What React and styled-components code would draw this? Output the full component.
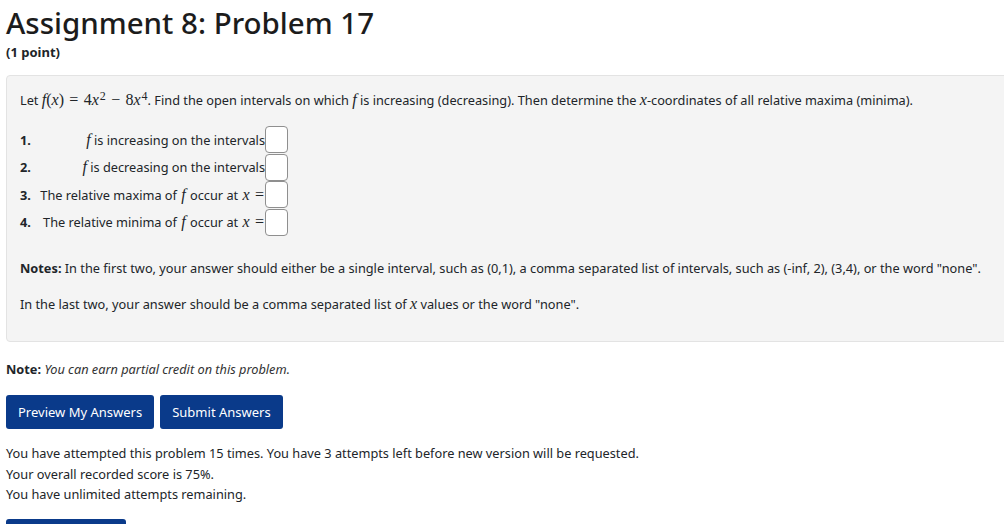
import React from 'react';
import styled, { createGlobalStyle } from 'styled-components';

const GlobalStyle = createGlobalStyle`
  html, body {
    margin: 0;
    padding: 0;
    background: #fff;
    overflow: hidden;
  }
  body {
    font-family: "Noto Sans", "Open Sans", sans-serif;
    color: #212529;
    font-size: 12.75px;
  }
`;

const Page = styled.div`
  padding: 0 0 0 6px;
  width: 1040px;
`;

const Title = styled.h1`
  font-size: 29.5px;
  font-weight: 500;
  line-height: 38px;
  margin: 4px 0 0 0;
  color: #1c1c1c;
`;

const Points = styled.div`
  font-size: 13px;
  font-weight: 700;
  line-height: 18px;
  margin-top: 1px;
`;

const ProblemBox = styled.div`
  margin-top: 14px;
  width: 1010px;
  background: #f4f4f4;
  border: 1px solid #e3e3e3;
  border-radius: 4px;
  padding: 14px 13px 27px;
  box-sizing: border-box;
`;

const Para = styled.p`
  margin: 0 0 ${p => p.gap || 0}px 0;
  line-height: 20px;
`;

const M = styled.span`
  font-family: "Liberation Serif", "DejaVu Serif", serif;
  font-style: ${p => (p.upright ? 'normal' : 'italic')};
  font-size: 16px;
  padding: 0 ${p => p.pad || 0}px;
`;

const Sup = styled.span`
  font-family: "Liberation Serif", serif;
  font-size: 12px;
  vertical-align: 5px;
  line-height: 0;
  padding-left: 1px;
`;

const AnswerGrid = styled.div`
  display: grid;
  grid-template-columns: 14px 231px 24px;
  grid-auto-rows: 27.5px;
  margin: 16px 0 22px;
  width: max-content;
`;

const Num = styled.span`
  font-weight: 700;
  align-self: center;
`;

const Label = styled.span`
  text-align: right;
  align-self: center;
  white-space: nowrap;
`;

const AnswerInput = styled.span`
  display: block;
  box-sizing: border-box;
  width: 23px;
  height: 27px;
  background: #fff;
  border: 1px solid #8f8f8f;
  border-radius: 4px;
`;

const NoteLine = styled.p`
  margin: 17px 0 0;
  line-height: 20px;
  em { color: #333; }
`;

const ButtonRow = styled.div`
  display: flex;
  gap: 6px;
  margin-top: 16px;
`;

const Button = styled.button`
  font-family: inherit;
  font-size: 13px;
  color: #fff;
  background: #0a3a8a;
  border: none;
  border-radius: 3px;
  height: 34px;
  padding: 0 12px;
  cursor: pointer;
`;

const Status = styled.div`
  margin-top: 14px;
  line-height: 20.5px;
`;

const FooterButton = styled(Button)`
  margin-top: 14px;
  width: 120px;
`;

const rows = [
  { n: '1.', label: <><M>f</M> is increasing on the intervals</> },
  { n: '2.', label: <><M>f</M> is decreasing on the intervals</> },
  { n: '3.', label: <>The relative maxima of <M pad={1}>f</M> occur at <M pad={1}>x</M> <M upright pad={1}>=</M></> },
  { n: '4.', label: <>The relative minima of <M pad={1}>f</M> occur at <M pad={1}>x</M> <M upright pad={1}>=</M></> },
];

export default function App() {
  return (
    <>
      <GlobalStyle />
      <Page>
        <Title>Assignment 8: Problem 17</Title>
        <Points>(1 point)</Points>
        <ProblemBox>
          <Para>
            Let <M>f</M><M upright>(</M><M>x</M><M upright>)</M> <M upright pad={2}>=</M> <M upright>4</M><M>x</M><Sup>2</Sup> <M upright pad={2}>−</M> <M upright>8</M><M>x</M><Sup>4</Sup>. Find the open intervals on which <M>f</M> is increasing (decreasing). Then determine the <M>x</M>-coordinates of all relative maxima (minima).
          </Para>
          <AnswerGrid>
            {rows.map(r => (
              <React.Fragment key={r.n}>
                <Num>{r.n}</Num>
                <Label>{r.label}</Label>
                <AnswerInput />
              </React.Fragment>
            ))}
          </AnswerGrid>
          <Para gap={16}>
            <b>Notes:</b> In the first two, your answer should either be a single interval, such as (0,1), a comma separated list of intervals, such as (-inf, 2), (3,4), or the word "none".
          </Para>
          <Para>
            In the last two, your answer should be a comma separated list of <M>x</M> values or the word "none".
          </Para>
        </ProblemBox>
        <NoteLine>
          <b>Note:</b> <em>You can earn partial credit on this problem.</em>
        </NoteLine>
        <ButtonRow>
          <Button>Preview My Answers</Button>
          <Button>Submit Answers</Button>
        </ButtonRow>
        <Status>
          You have attempted this problem 15 times. You have 3 attempts left before new version will be requested.<br />
          Your overall recorded score is 75%.<br />
          You have unlimited attempts remaining.
        </Status>
        <FooterButton>&nbsp;</FooterButton>
      </Page>
    </>
  );
}
